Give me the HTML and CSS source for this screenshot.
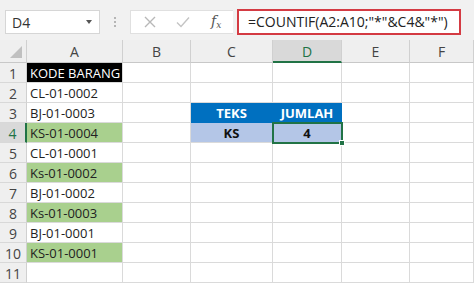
FILE: index.html
```html
<!DOCTYPE html>
<html>
<head>
<meta charset="utf-8">
<link rel="stylesheet" href="styles.css">
</head>
<body>
<div class="app">
  <div class="toolbar">
    <div class="namebox">
      <span class="name">D4</span>
      <span class="caret"></span>
    </div>
    <div class="dots"><i></i><i></i><i></i></div>
    <div class="fbar">
      <div class="icons">
        <svg class="ico" width="12" height="12" viewBox="0 0 12 12"><path d="M1 1L11 11M11 1L1 11" stroke="#b8b8b8" stroke-width="1.4" fill="none"/></svg>
        <svg class="ico" width="14" height="12" viewBox="0 0 14 12"><path d="M1 6.5L5 10.5L13 1.5" stroke="#c4c4c4" stroke-width="1.4" fill="none"/></svg>
        <span class="fx"><i>f</i><sub>x</sub></span>
      </div>
      <div class="formula">=COUNTIF(A2:A10;"*"&amp;C4&amp;"*")</div>
    </div>
  </div>
  <div class="sheet">
    <div class="hd corner"><span class="tri"></span></div>
    <div class="hd">A</div>
    <div class="hd">B</div>
    <div class="hd">C</div>
    <div class="hd sel-col">D</div>
    <div class="hd">E</div>
    <div class="hd">F</div>

    <div class="rh">1</div><div class="c black">KODE BARANG</div><div class="c"></div><div class="c"></div><div class="c"></div><div class="c"></div><div class="c"></div>
    <div class="rh">2</div><div class="c">CL-01-0002</div><div class="c"></div><div class="c"></div><div class="c"></div><div class="c"></div><div class="c"></div>
    <div class="rh">3</div><div class="c">BJ-01-0003</div><div class="c"></div><div class="c blue">TEKS</div><div class="c blue">JUMLAH</div><div class="c"></div><div class="c"></div>
    <div class="rh sel-row">4</div><div class="c green">KS-01-0004</div><div class="c"></div><div class="c lblue">KS</div><div class="c lblue active">4<span class="handle"></span></div><div class="c"></div><div class="c"></div>
    <div class="rh">5</div><div class="c">CL-01-0001</div><div class="c"></div><div class="c"></div><div class="c"></div><div class="c"></div><div class="c"></div>
    <div class="rh">6</div><div class="c green">Ks-01-0002</div><div class="c"></div><div class="c"></div><div class="c"></div><div class="c"></div><div class="c"></div>
    <div class="rh">7</div><div class="c">BJ-01-0002</div><div class="c"></div><div class="c"></div><div class="c"></div><div class="c"></div><div class="c"></div>
    <div class="rh">8</div><div class="c green">Ks-01-0003</div><div class="c"></div><div class="c"></div><div class="c"></div><div class="c"></div><div class="c"></div>
    <div class="rh">9</div><div class="c">BJ-01-0001</div><div class="c"></div><div class="c"></div><div class="c"></div><div class="c"></div><div class="c"></div>
    <div class="rh">10</div><div class="c green">KS-01-0001</div><div class="c"></div><div class="c"></div><div class="c"></div><div class="c"></div><div class="c"></div>
    <div class="rh">11</div><div class="c"></div><div class="c"></div><div class="c"></div><div class="c"></div><div class="c"></div><div class="c"></div>
  </div>
</div>
</body>
</html>
```

FILE: styles.css
```css
* { box-sizing: border-box; }
html, body {
  margin: 0;
  padding: 0;
  width: 474px;
  height: 284px;
  overflow: hidden;
  background: #ffffff;
}
.app {
  width: 474px;
  height: 284px;
  overflow: hidden;
  font-family: "Open Sans", "Liberation Sans", sans-serif;
}
.toolbar {
  height: 40px;
  background: #f1f1f1;
  display: flex;
  align-items: flex-start;
  padding-top: 10px;
  padding-left: 5px;
}
.namebox {
  width: 95px;
  height: 24px;
  background: #fff;
  border: 1px solid #d6d6d6;
  display: flex;
  align-items: center;
  justify-content: space-between;
  padding: 0 6px 0 6px;
}
.name {
  font-size: 14px;
  color: #333;
}
.caret {
  width: 0;
  height: 0;
  border-left: 3.5px solid transparent;
  border-right: 3.5px solid transparent;
  border-top: 4px solid #555;
  margin-right: 1px;
}
.dots {
  width: 30px;
  height: 24px;
  display: flex;
  flex-direction: column;
  align-items: center;
  justify-content: center;
  gap: 2px;
}
.dots i {
  display: block;
  width: 2px;
  height: 2px;
  background: #b5b5b5;
}
.fbar {
  flex: 1;
  display: flex;
  align-items: flex-start;
  height: 24px;
}
.icons {
  width: 103px;
  height: 24px;
  background: #fff;
  border: 1px solid #e0e0e0;
  border-right: none;
  display: flex;
  align-items: center;
  padding-left: 13px;
}
.icons .ico:first-child { margin-right: 20px; }
.icons .ico:nth-child(2) { margin-right: 21px; }
.fx {
  font-family: "DejaVu Serif", "Liberation Serif", serif;
  font-size: 14px;
  color: #555;
  line-height: 1;
}
.fx sub { font-size: 9px; font-style: italic; vertical-align: -2px; }
.formula {
  width: 224px;
  height: 26px;
  margin-top: -1px;
  margin-left: 4px;
  border: 2px solid #d43b43;
  background: #fff;
  font-size: 14px;
  color: #222;
  padding-left: 9px;
  line-height: 21px;
  white-space: nowrap;
}
.sheet {
  display: grid;
  grid-template-columns: 27px 96px 68px 82px 69px 68px 64px;
  grid-template-rows: 23px repeat(11, 20px);
  background: #fff;
}
.hd {
  background: #efefef;
  border-right: 1px solid #d0d0d0;
  border-bottom: 1px solid #c8c8c8;
  font-size: 14px;
  color: #444;
  display: flex;
  align-items: center;
  justify-content: center;
  padding-top: 1px;
}
.corner { position: relative; }
.tri {
  position: absolute;
  right: 4px;
  bottom: 4px;
  width: 0;
  height: 0;
  border-left: 12px solid transparent;
  border-bottom: 12px solid #c0c0c0;
}
.sel-col {
  background: #d9d9d9;
  color: #217346;
  border-bottom: 2px solid #217346;
}
.rh {
  background: #efefef;
  border-right: 1px solid #d0d0d0;
  border-bottom: 1px solid #d8d8d8;
  font-size: 14px;
  color: #444;
  display: flex;
  align-items: center;
  justify-content: center;
  padding-top: 1px;
}
.sel-row {
  background: #d9d9d9;
  color: #217346;
  border-right: 2px solid #217346;
}
.c {
  border-right: 1px solid #dadada;
  border-bottom: 1px solid #dadada;
  font-size: 13px;
  color: #222;
  padding-left: 3px;
  padding-top: 1px;
  display: flex;
  align-items: center;
  white-space: nowrap;
  overflow: visible;
}
.black { background: #000; color: #fff; }
.green { background: #a9d08e; }
.blue {
  background: #0070c0;
  color: #fff;
  font-weight: bold;
  justify-content: center;
  padding-left: 0;
  border-color: #0070c0;
}
.lblue {
  background: #b4c6e7;
  font-weight: bold;
  color: #111;
  justify-content: center;
  padding-left: 0;
}
.active {
  position: relative;
  outline: 2px solid #217346;
  outline-offset: -1px;
}
.handle {
  position: absolute;
  right: -4px;
  bottom: -4px;
  width: 6px;
  height: 6px;
  background: #217346;
  border: 1px solid #fff;
}
```
